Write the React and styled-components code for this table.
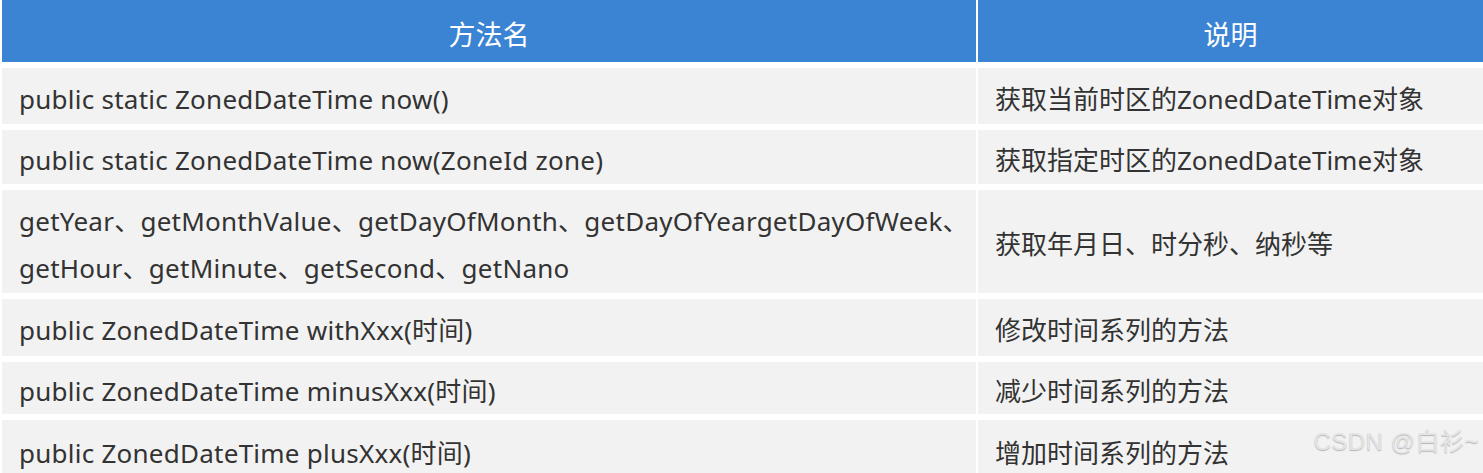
import React from 'react';
import styled, { createGlobalStyle } from 'styled-components';

const GlobalStyle = createGlobalStyle`
  html, body {
    margin: 0;
    padding: 0;
    background: #ffffff;
  }
  body {
    font-family: "Noto Sans", "Noto Sans CJK SC", sans-serif;
  }
`;

const Page = styled.div`
  position: relative;
  width: 1483px;
  height: 473px;
  overflow: hidden;
  background: #ffffff;
`;

const Table = styled.div`
  display: grid;
  grid-template-columns: 974px 1fr;
  column-gap: 2px;
  row-gap: 6px;
  padding-left: 2px;
`;

const HeadCell = styled.div`
  height: 62px;
  background: #3b84d4;
  color: #ffffff;
  font-size: 27px;
  display: flex;
  align-items: center;
  justify-content: center;
  padding-top: 5px;
  box-sizing: border-box;
`;

const Cell = styled.div`
  height: ${(p) => p.$h}px;
  background: #f2f2f2;
  color: #333333;
  font-size: 26px;
  line-height: 47px;
  letter-spacing: ${(p) => (p.$wide ? '0.25px' : '0')};
  display: flex;
  flex-direction: column;
  justify-content: center;
  padding: 6px 17px 0;
  box-sizing: border-box;
  white-space: nowrap;
`;

const Watermark = styled.div`
  position: absolute;
  right: 4px;
  bottom: 16px;
  font-family: "Liberation Sans", "Noto Sans CJK SC", sans-serif;
  font-size: 24px;
  color: #e4e4e4;
  text-shadow: 0 1px 1px #b5b5b5;
  letter-spacing: 0.5px;
`;

const rows = [
  { h: 56, method: ['public static ZonedDateTime now()'], desc: '获取当前时区的ZonedDateTime对象' },
  { h: 54, method: ['public static ZonedDateTime now(ZoneId zone)'], desc: '获取指定时区的ZonedDateTime对象' },
  {
    h: 103,
    method: ['getYear、getMonthValue、getDayOfMonth、getDayOfYeargetDayOfWeek、', 'getHour、getMinute、getSecond、getNano'],
    desc: '获取年月日、时分秒、纳秒等',
  },
  { h: 57, method: ['public ZonedDateTime withXxx(时间)'], desc: '修改时间系列的方法' },
  { h: 52, method: ['public ZonedDateTime minusXxx(时间)'], desc: '减少时间系列的方法' },
  { h: 60, method: ['public ZonedDateTime plusXxx(时间)'], desc: '增加时间系列的方法' },
];

export default function App() {
  return (
    <>
      <GlobalStyle />
      <Page>
        <Table>
          <HeadCell>方法名</HeadCell>
          <HeadCell>说明</HeadCell>
          {rows.map((r, i) => (
            <React.Fragment key={i}>
              <Cell $h={r.h} $wide>
                {r.method.map((line) => (
                  <div key={line}>{line}</div>
                ))}
              </Cell>
              <Cell $h={r.h}>{r.desc}</Cell>
            </React.Fragment>
          ))}
        </Table>
        <Watermark>CSDN @白衫~</Watermark>
      </Page>
    </>
  );
}
